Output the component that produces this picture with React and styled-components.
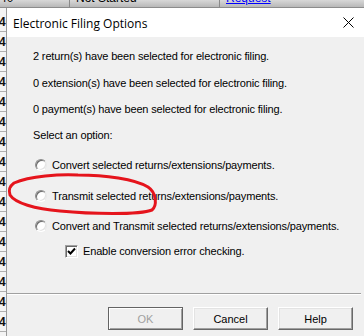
import React from "react";
import styled, { createGlobalStyle } from "styled-components";

const Global = createGlobalStyle`
  html, body { margin: 0; padding: 0; }
  body { width: 364px; height: 336px; overflow: hidden; background: #f0f0f0; }
`;

const Page = styled.div`
  position: relative;
  width: 364px;
  height: 336px;
  overflow: hidden;
  display: flex;
  flex-direction: column;
  font-family: "Liberation Sans", Arial, sans-serif;
`;

const BgHeader = styled.div`
  height: 8px;
  flex: none;
  display: flex;
  background: linear-gradient(#d8d8d8, #b8b8b8);
  border-bottom: 1px solid #8c8c8c;
  box-sizing: border-box;
  overflow: hidden;
`;

const BgCell = styled.div`
  width: ${(p) => p.$w}px;
  flex: none;
  display: flex;
  align-items: flex-end;
  padding-left: ${(p) => p.$pad || 0}px;
  box-sizing: border-box;
  border-right: ${(p) => (p.$divider ? "1px solid #8a8a8a" : "none")};
  font-size: 12px;
  line-height: 14px;
  color: ${(p) => p.$color || "#000"};
  text-decoration: ${(p) => (p.$link ? "underline" : "none")};
  white-space: nowrap;
  overflow: hidden;
  & > span { margin-bottom: 2px; }
`;

const Main = styled.div`
  flex: 1;
  display: flex;
  min-height: 0;
`;

const LeftStrip = styled.div`
  width: 6px;
  flex: none;
  background: #f4f4f4;
  padding-top: 4px;
  overflow: hidden;
  display: flex;
  flex-direction: column;
`;

const StripRow = styled.div`
  height: 20px;
  flex: none;
  box-sizing: border-box;
  border-bottom: 1px solid #b0b0b0;
  display: flex;
  align-items: center;
  font-size: 12px;
  font-weight: bold;
  color: #101010;
  margin-left: -1px;
  white-space: nowrap;
`;

const Dialog = styled.div`
  flex: 1;
  display: flex;
  flex-direction: column;
  border-left: 1px solid #9a9a9a;
  background: #f0f0f0;
`;

const TitleBar = styled.div`
  height: 29px;
  flex: none;
  background: #fff;
  display: flex;
  align-items: center;
  justify-content: space-between;
  padding: 0 10px 0 6px;
`;

const Title = styled.div`
  font-family: "Open Sans", "Noto Sans", sans-serif;
  font-size: 12px;
  color: #000;
  margin-top: 1px;
`;

const Body = styled.div`
  flex: 1;
  display: flex;
  flex-direction: column;
  padding: 12px 0 0 0;
  font-size: 11px;
  letter-spacing: -0.15px;
  line-height: 14px;
  color: #000;
`;

const Line = styled.div`
  padding-left: ${(p) => p.$indent || 26}px;
  margin-top: ${(p) => p.$mt || 0}px;
  white-space: nowrap;
`;

const OptionRow = styled.label`
  display: flex;
  align-items: center;
  gap: 5px;
  padding-left: ${(p) => p.$indent}px;
  margin-top: ${(p) => p.$mt}px;
  height: 14px;
  white-space: nowrap;
`;

const Radio = styled.span`
  width: 12px;
  height: 12px;
  box-sizing: border-box;
  border-radius: 50%;
  background: #fff;
  border: 1px solid;
  border-color: #8c8c8c #e8e8e8 #ffffff #8c8c8c;
  box-shadow: inset 1px 1px 0 #6a6a6a, inset -1px -1px 0 #e3e3e3;
  flex: none;
`;

const Check = styled.span`
  width: 13px;
  height: 13px;
  box-sizing: border-box;
  background: #fff;
  border: 1px solid;
  border-color: #a0a0a0 #ffffff #ffffff #a0a0a0;
  box-shadow: inset 1px 1px 0 #696969, inset -1px -1px 0 #e3e3e3;
  display: flex;
  align-items: center;
  justify-content: center;
  flex: none;
`;

const Separator = styled.div`
  height: 0;
  border-top: 1px solid #a0a0a0;
  border-bottom: 1px solid #ffffff;
  margin: ${(p) => p.$mt}px 3px 0 0;
`;

const ButtonRow = styled.div`
  display: flex;
  justify-content: flex-end;
  gap: 10px;
  padding-right: 11px;
  margin-top: 12px;
`;

const Button = styled.div`
  width: 75px;
  height: 23px;
  box-sizing: border-box;
  display: flex;
  align-items: center;
  justify-content: center;
  font-size: 11px;
  letter-spacing: 0;
  background: #f0f0f0;
  color: ${(p) => (p.$disabled ? "#a0a0a0" : "#000")};
  border: 1px solid;
  border-color: ${(p) =>
    p.$default ? "#646464" : "#ffffff #696969 #696969 #ffffff"};
  box-shadow: ${(p) =>
    p.$default
      ? "inset 1px 1px 0 #ffffff, inset -1px -1px 0 #a0a0a0"
      : "inset -1px -1px 0 #a0a0a0, inset 1px 1px 0 #e3e3e3"};
`;

const Mark = styled.svg`
  position: absolute;
  left: 0;
  top: 0;
  pointer-events: none;
`;

const stripRows = Array.from({ length: 17 }, (_, i) => i);

export default function App() {
  return (
    <>
      <Global />
      <Page>
        <BgHeader>
          <BgCell $w={70} $divider>
            <span>40</span>
          </BgCell>
          <BgCell $w={150} $pad={6} $divider>
            <span>Not Started</span>
          </BgCell>
          <BgCell $w={144} $pad={6} $color="#0000ff" $link>
            <span>Request</span>
          </BgCell>
        </BgHeader>
        <Main>
          <LeftStrip>
            {stripRows.map((i) => (
              <StripRow key={i}>40</StripRow>
            ))}
          </LeftStrip>
          <Dialog>
            <TitleBar>
              <Title>Electronic Filing Options</Title>
              <svg width="11" height="11" viewBox="0 0 11 11">
                <path d="M0.5 0.5 L10.5 10.5 M10.5 0.5 L0.5 10.5" stroke="#000" strokeWidth="1" fill="none" />
              </svg>
            </TitleBar>
            <Body>
              <Line>2 return(s) have been selected for electronic filing.</Line>
              <Line $mt={13}>0 extension(s) have been selected for electronic filing.</Line>
              <Line $mt={12}>0 payment(s) have been selected for electronic filing.</Line>
              <Line $mt={12}>Select an option:</Line>
              <OptionRow $indent={28} $mt={16}>
                <Radio />
                Convert selected returns/extensions/payments.
              </OptionRow>
              <OptionRow $indent={28} $mt={17}>
                <Radio />
                Transmit selected returns/extensions/payments.
              </OptionRow>
              <OptionRow $indent={28} $mt={16}>
                <Radio />
                Convert and Transmit selected returns/extensions/payments.
              </OptionRow>
              <OptionRow $indent={58} $mt={11}>
                <Check>
                  <svg width="9" height="9" viewBox="0 0 9 9">
                    <path d="M1 4 L3.5 6.5 L8 1.5" stroke="#000" strokeWidth="2" fill="none" />
                  </svg>
                </Check>
                Enable conversion error checking.
              </OptionRow>
              <Separator $mt={35} />
              <ButtonRow>
                <Button $default $disabled>OK</Button>
                <Button>Cancel</Button>
                <Button>Help</Button>
              </ButtonRow>
            </Body>
          </Dialog>
        </Main>
        <Mark width="364" height="336" viewBox="0 0 364 336">
          <path
            d="M14 183 C30 176, 60 174, 78 175 C105 175, 135 179, 148 187 C157 193, 157 206, 152 210 C140 215, 90 214, 60 211 C35 209, 15 203, 10 195 C8 189, 10 186, 14 183 Z"
            stroke="#e5141c"
            strokeWidth="3"
            fill="none"
            strokeLinecap="round"
          />
        </Mark>
      </Page>
    </>
  );
}
